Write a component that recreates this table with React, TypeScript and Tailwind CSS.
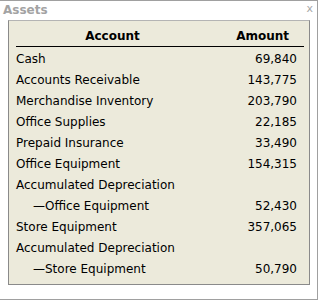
import React from "react";

type Row = { label: string; amount?: string; indent?: boolean };

const rows: Row[] = [
  { label: "Cash", amount: "69,840" },
  { label: "Accounts Receivable", amount: "143,775" },
  { label: "Merchandise Inventory", amount: "203,790" },
  { label: "Office Supplies", amount: "22,185" },
  { label: "Prepaid Insurance", amount: "33,490" },
  { label: "Office Equipment", amount: "154,315" },
  { label: "Accumulated Depreciation" },
  { label: "\u2014Office Equipment", amount: "52,430", indent: true },
  { label: "Store Equipment", amount: "357,065" },
  { label: "Accumulated Depreciation" },
  { label: "\u2014Store Equipment", amount: "50,790", indent: true },
];

const App = () => {
  return (
    <div className="w-[319px] h-[307px] bg-white font-['DejaVu_Sans',Verdana,sans-serif] text-[12px]">
      <div className="w-[318px] h-[300px] border-t border-r border-b border-[#a0a0a0] relative">
        <div className="h-[19px] pl-[3px] pt-[1px] font-bold text-[#a3a3a3] leading-[16px]">Assets</div>
        <span className="absolute right-[4px] top-[1px] text-[11px] leading-[14px] text-[#a8a8a8]">x</span>
        <div className="ml-[8px] w-[302px] h-[265px] bg-[#eceadb] border border-[#8a8a8a] border-t-[#b4b4b4] pl-[7px] pr-[5px] text-black">
          {/* column headings */}
          <div className="flex h-[26px] pt-[7px] border-b border-black font-bold leading-[16px]">
            <div className="w-[193px] text-center">Account</div>
            <div className="flex-1 text-right pr-[15px]">Amount</div>
          </div>
          <div className="mt-[1.5px]">
            {rows.map((r, i) => (
              <div key={i} className="flex h-[21px] leading-[21px]">
                <div className={`flex-1 whitespace-nowrap ${r.indent ? "pl-[17px]" : ""}`}>{r.label}</div>
                <div className="text-right pr-[7px]">{r.amount}</div>
              </div>
            ))}
          </div>
        </div>
      </div>
    </div>
  );
};

export default App;
